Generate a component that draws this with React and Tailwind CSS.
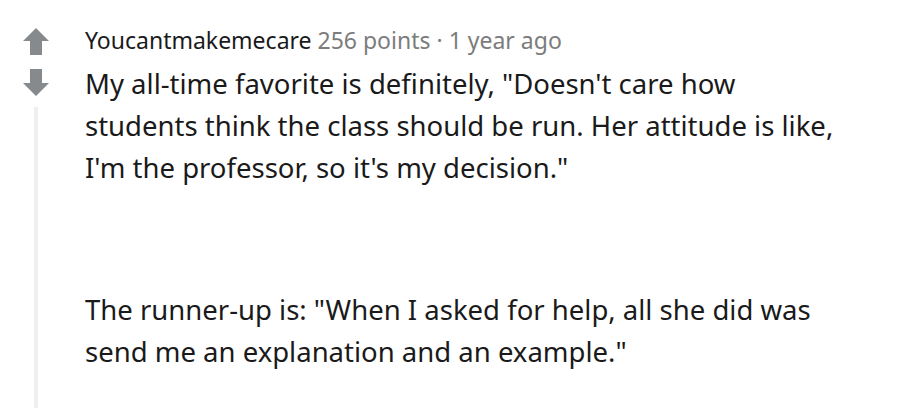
const Arrow = ({ down }) => (
  <svg width="26" height="27" viewBox="0 0 26 27" className={down ? 'rotate-180' : ''}>
    <path d="M13 0 L26 13 L19 13 L19 27 L7 27 L7 13 L0 13 Z" fill="#878a8c" />
  </svg>
)

const App = () => {
  return (
    <div className="w-[912px] h-[408px] bg-white overflow-hidden flex" style={{ fontFamily: '"Noto Sans", "Open Sans", sans-serif' }}>
      <div className="w-[85px] shrink-0 flex flex-col pl-[23px] pt-[28px]">
        <div className="w-[26px] flex flex-col items-center">
          <Arrow />
          <div className="h-[14px]" />
          <Arrow down />
          <div className="mt-[11px] w-[4px] h-[400px] bg-[#edeff1]" />
        </div>
      </div>
      <div className="flex-1 pt-[24px]">
        <div className="text-[23px] leading-[32px] text-[#1a1a1b]">
          Youcantmakemecare <span className="text-[#7c7c7c]">256 points · 1 year ago</span>
        </div>
        <div className="mt-[7px] text-[27.5px] leading-[42px] text-[#1a1a1b] whitespace-nowrap">
          <p>My all-time favorite is definitely, "Doesn't care how<br />students think the class should be run. Her attitude is like,<br />I'm the professor, so it's my decision."</p>
          <p className="mt-[100px]">The runner-up is: "When I asked for help, all she did was<br />send me an explanation and an example."</p>
        </div>
      </div>
    </div>
  )
}

export default App
